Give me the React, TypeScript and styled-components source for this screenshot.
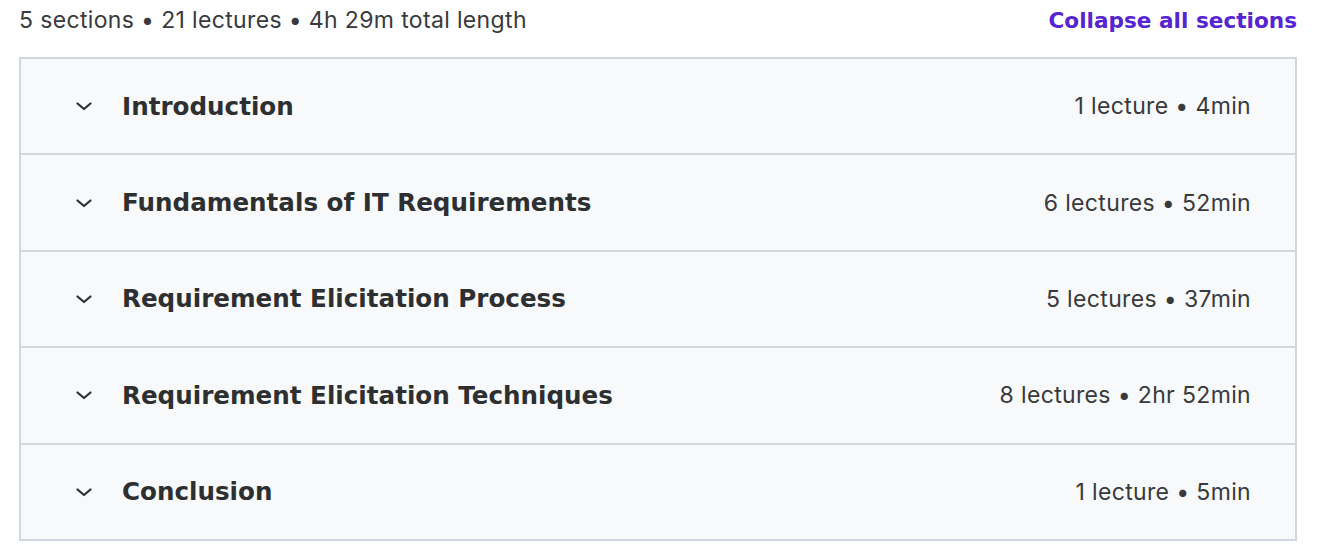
import React from 'react';
import styled, { createGlobalStyle } from 'styled-components';

const GlobalStyle = createGlobalStyle`
  body {
    margin: 0;
    background: #fff;
    font-family: Inter, "Liberation Sans", Arial, sans-serif;
  }
`;

const Page = styled.div`
  padding: 0 23px 0 19px;
`;

const Summary = styled.div`
  display: flex;
  align-items: center;
  justify-content: space-between;
  height: 40px;
  margin-bottom: 17px;
`;

const SummaryText = styled.span`
  font-size: 23px;
  letter-spacing: 0.35px;
  color: #383a3d;
`;

const CollapseButton = styled.button`
  border: none;
  background: none;
  padding: 0;
  font-family: "DejaVu Sans", sans-serif;
  font-size: 21.6px;
  font-weight: 700;
  color: #5624d0;
  cursor: pointer;
`;

const Sections = styled.div`
  border: 2px solid #d1d7dc;
`;

const Section = styled.div`
  display: flex;
  align-items: center;
  height: 94.4px;
  padding: 0 44px 0 50.5px;
  background: #f7f9fa;
  border-top: 2px solid #d1d7dc;

  &:first-child {
    border-top: none;
  }
`;

const Chevron = styled.svg`
  width: 24px;
  height: 24px;
  margin-right: 26.5px;
  flex-shrink: 0;
`;

const Title = styled.span`
  flex: 1;
  font-family: "DejaVu Sans", sans-serif;
  font-size: 24.6px;
  font-weight: 700;
  color: #2d2f31;
`;

const Meta = styled.span`
  font-size: 23px;
  letter-spacing: 0.35px;
  color: #383a3d;
`;

const sections = [
  { title: 'Introduction', meta: '1 lecture • 4min' },
  { title: 'Fundamentals of IT Requirements', meta: '6 lectures • 52min' },
  { title: 'Requirement Elicitation Process', meta: '5 lectures • 37min' },
  { title: 'Requirement Elicitation Techniques', meta: '8 lectures • 2hr 52min' },
  { title: 'Conclusion', meta: '1 lecture • 5min' },
];

const App = (): JSX.Element => (
  <>
    <GlobalStyle />
    <Page>
      <Summary>
        <SummaryText>5 sections • 21 lectures • 4h 29m total length</SummaryText>
        <CollapseButton>Collapse all sections</CollapseButton>
      </Summary>
      <Sections>
        {sections.map((item) => (
          <Section key={item.title}>
            <Chevron viewBox="0 0 24 24" fill="none">
              <path
                d="M5.5 9.5l6.5 5.5 6.5-5.5"
                stroke="#2d2f31"
                strokeWidth="2.2"
                strokeLinecap="round"
                strokeLinejoin="round"
              />
            </Chevron>
            <Title>{item.title}</Title>
            <Meta>{item.meta}</Meta>
          </Section>
        ))}
      </Sections>
    </Page>
  </>
);

export default App;
